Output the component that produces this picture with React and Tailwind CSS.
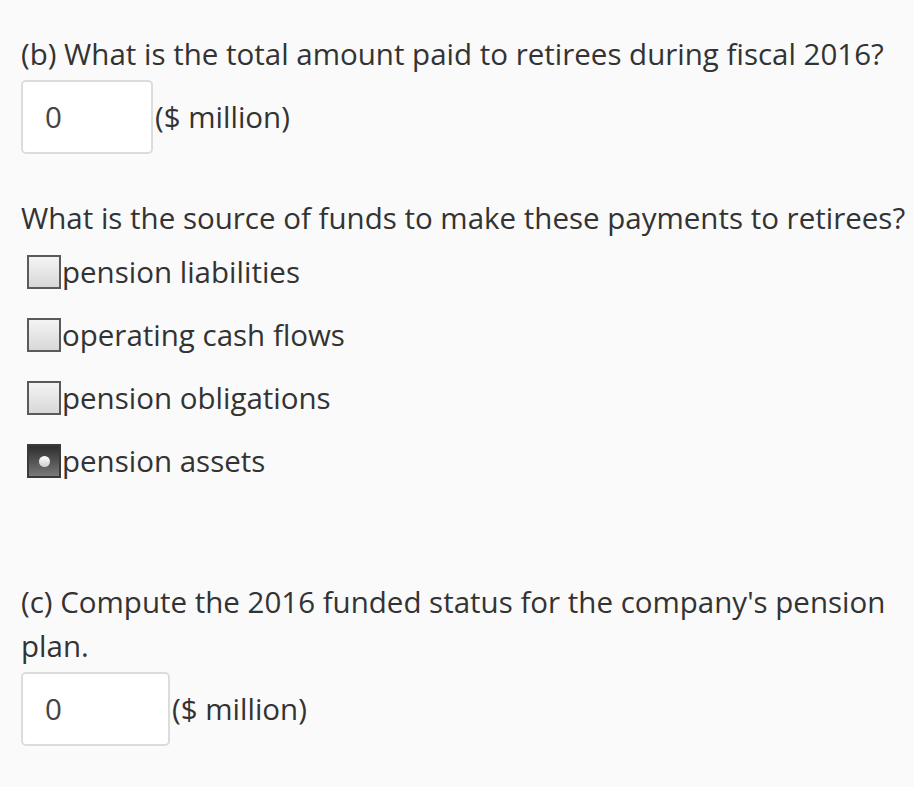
import React from "react";

function Box({ checked }) {
  if (checked) {
    return (
      <span className="relative inline-flex h-[34px] w-[34px] shrink-0 items-center justify-center border-2 border-[#3a3a3a] bg-gradient-to-b from-[#2e2e2e] to-[#7a7a7a]">
        <span className="h-[11px] w-[11px] rounded-full bg-gradient-to-b from-white to-[#cfcfcf]" />
      </span>
    );
  }
  return (
    <span className="inline-block h-[34px] w-[34px] shrink-0 border-2 border-[#5a5a5a] bg-gradient-to-b from-[#f4f4f4] to-[#d8d8d8]" />
  );
}

function Answer({ width, label }) {
  return (
    <div className="flex items-center">
      <div
        className={`flex h-[74px] ${width} items-center rounded-[5px] border-2 border-[#dcdcdc] bg-white pl-[22px] text-[#444]`}
      >
        0
      </div>
      <span className="ml-[2px]">{label}</span>
    </div>
  );
}

export default function App() {
  const options = [
    { t: "pension liabilities", c: false },
    { t: "operating cash flows", c: false },
    { t: "pension obligations", c: false },
    { t: "pension assets", c: true },
  ];
  return (
    <div
      className="min-h-[787px] w-[914px] bg-[#fafafa] pl-[21px] pr-[4px] pt-[32px] text-[29.5px] leading-[44px] text-[#333]"
      style={{ fontFamily: '"Open Sans", sans-serif' }}
    >
      <p>(b) What is the total amount paid to retirees during fiscal 2016?</p>
      <div className="mt-[4px]">
        <Answer width="w-[132px]" label="($ million)" />
      </div>
      <p className="mt-[42px]">What is the source of funds to make these payments to retirees?</p>
      <div className="mt-[15px] flex flex-col gap-[29px] pl-[6px]">
        {options.map((o) => (
          <div key={o.t} className="flex items-center">
            <Box checked={o.c} />
            <span className="pl-[1px] leading-[34px]">{o.t}</span>
          </div>
        ))}
      </div>
      <p className="mt-[102px]">(c) Compute the 2016 funded status for the company's pension plan.</p>
      <div className="mt-[4px]">
        <Answer width="w-[149px]" label="($ million)" />
      </div>
    </div>
  );
}
